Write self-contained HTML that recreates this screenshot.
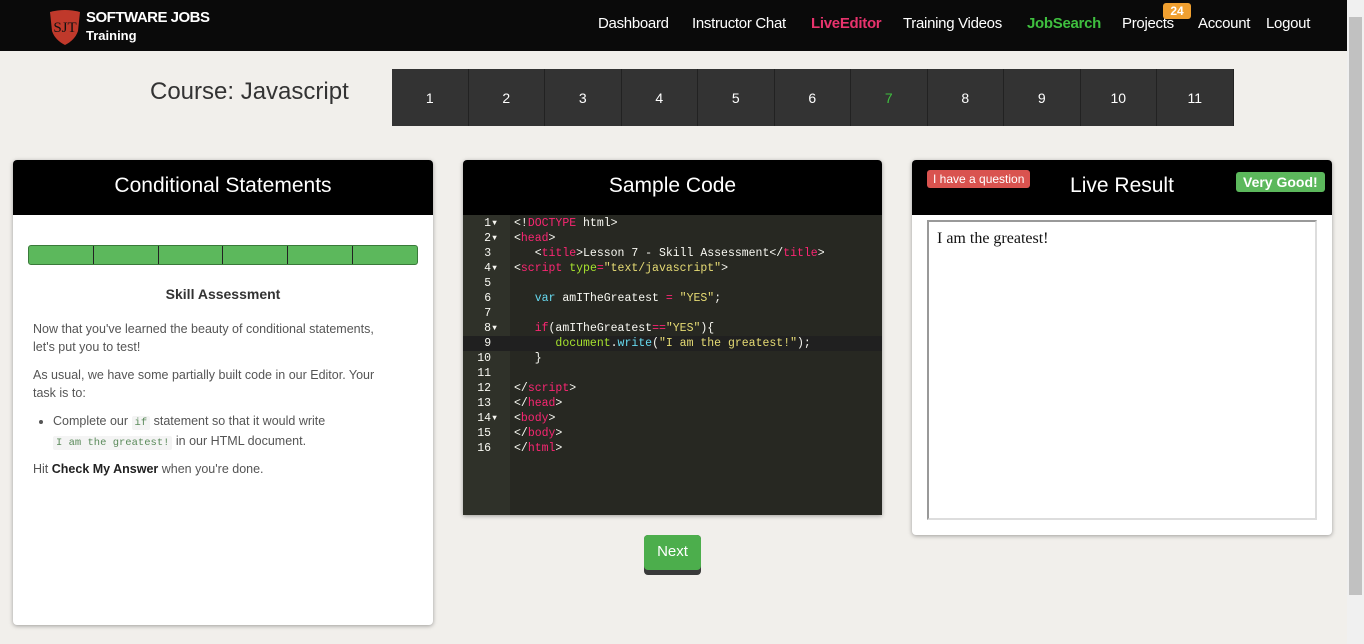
<!DOCTYPE html>
<html><head><style>
*{box-sizing:border-box;margin:0;padding:0}
body{width:1364px;height:644px;overflow:hidden;background:#f1efeb;font-family:"Liberation Sans",sans-serif;position:relative}
.nav{position:absolute;left:0;top:0;width:1347px;height:51px;background:#0a0a0a}
.nav a{position:absolute;top:15px;color:#fff;font-size:15px;text-decoration:none;letter-spacing:-.3px}
.sb{position:absolute;right:0;top:0;width:17px;height:644px;background:#f0f0f0}
.sb div{position:absolute;left:2px;top:17px;width:13px;height:578px;background:#c1c1c1}
.tabs{position:absolute;left:392px;top:69px;display:flex}
.tabs div{width:76.5px;height:57px;background:#333;border-right:1px solid #222;color:#fff;font-size:14px;display:flex;align-items:center;justify-content:center}
.panel{position:absolute;background:#fff;border-radius:4px;box-shadow:0 1px 4px rgba(0,0,0,.35);overflow:hidden}
.ph{height:55px;background:#000;color:#fff;font-size:21px;text-align:center;line-height:52px}
.code{position:absolute;top:55px;left:0;right:0;bottom:0;background:#272822;font-family:"Liberation Mono",monospace;font-size:11.5px}
.gut{position:absolute;left:0;top:0;bottom:0;width:47px;background:#2f3129;color:#8f908a}
.ln{height:15px;line-height:15px;white-space:pre;color:#f8f8f2}
.gut .ln{text-align:right;padding-right:12px}
.t{color:#f92672}.s{color:#e6db74}.a{color:#a6e22e}.k{color:#66d9ef}
.txt{font-size:12.5px;color:#555;line-height:18px}
code{font-family:"Liberation Mono",monospace;font-size:10.5px;background:#f4f4f4;color:#5a8a5a;padding:1px 3px;border-radius:2px;white-space:nowrap}
</style></head><body>
<div class="nav">
<svg style="position:absolute;left:48px;top:9px" width="34" height="37" viewBox="0 0 34 37"><path d="M2 3 Q17 -1 32 3 L30 22 Q27 31 17 36 Q7 31 4 22Z" fill="#c0392b"/><text x="17" y="23" font-family="Liberation Serif" font-size="15" fill="#111" text-anchor="middle">SJT</text></svg>
<div style="position:absolute;left:86px;top:9px;color:#fff;font-weight:bold;font-size:15px;letter-spacing:-.5px">SOFTWARE JOBS</div>
<div style="position:absolute;left:86px;top:28px;color:#fff;font-weight:bold;font-size:13px">Training</div>
<a style="left:598px">Dashboard</a>
<a style="left:692px">Instructor Chat</a>
<a style="left:811px;color:#e8336d;font-weight:bold">LiveEditor</a>
<a style="left:903px">Training Videos</a>
<a style="left:1027px;color:#3fbf3f;font-weight:bold">JobSearch</a>
<a style="left:1122px">Projects</a>
<div style="position:absolute;left:1163px;top:3px;width:28px;height:16px;background:#f0a030;border-radius:3px;color:#fff;font-size:12px;font-weight:bold;text-align:center;line-height:16px">24</div>
<a style="left:1198px">Account</a>
<a style="left:1266px">Logout</a>
</div>
<div class="sb"><div></div></div>
<div style="position:absolute;left:150px;top:78px;font-size:24px;color:#333">Course: Javascript</div>
<div class="tabs"><div>1</div><div>2</div><div>3</div><div>4</div><div>5</div><div>6</div><div style="color:#3fbf3f">7</div><div>8</div><div>9</div><div>10</div><div>11</div></div>

<div class="panel" style="left:13px;top:160px;width:420px;height:465px">
<div class="ph">Conditional Statements</div>
<div style="position:absolute;left:15px;top:85px;width:390px;height:20px;background:#5cb85c;border-radius:3px;border:1px solid #3a7a3a;display:flex">
<div style="flex:1;border-right:1px solid #222"></div><div style="flex:1;border-right:1px solid #222"></div><div style="flex:1;border-right:1px solid #222"></div><div style="flex:1;border-right:1px solid #222"></div><div style="flex:1;border-right:1px solid #222"></div><div style="flex:1"></div></div>
<div style="position:absolute;top:126px;width:100%;text-align:center;font-weight:bold;font-size:14px;color:#333">Skill Assessment</div>
<div class="txt" style="position:absolute;left:20px;top:160px;width:370px">
<p>Now that you've learned the beauty of conditional statements,<br>let's put you to test!</p>
<p style="margin-top:10px">As usual, we have some partially built code in our Editor. Your<br>task is to:</p>
<ul style="margin:10px 0 0 20px"><li>Complete our <code>if</code> statement so that it would write<br><code>I am the greatest!</code> in our HTML document.</li></ul>
<p style="margin-top:8px">Hit <b style="color:#222">Check My Answer</b> when you're done.</p>
</div></div>

<div class="panel" style="left:463px;top:160px;width:419px;height:355px;border-radius:4px 4px 0 0">
<div class="ph">Sample Code</div>
<div class="code">
<div class="gut" style="padding-top:1px"><div class="ln">1▾</div><div class="ln">2▾</div><div class="ln">3 </div><div class="ln">4▾</div><div class="ln">5 </div><div class="ln">6 </div><div class="ln">7 </div><div class="ln">8▾</div><div class="ln" style="background:#202020">9 </div><div class="ln">10 </div><div class="ln">11 </div><div class="ln">12 </div><div class="ln">13 </div><div class="ln">14▾</div><div class="ln">15 </div><div class="ln">16 </div></div>
<div style="position:absolute;left:47px;top:1px;right:0">
<div class="ln" style="padding-left:4px">&lt;!<span class="t">DOCTYPE</span> html&gt;</div>
<div class="ln" style="padding-left:4px">&lt;<span class="t">head</span>&gt;</div>
<div class="ln" style="padding-left:4px">   &lt;<span class="t">title</span>&gt;Lesson 7 - Skill Assessment&lt;/<span class="t">title</span>&gt;</div>
<div class="ln" style="padding-left:4px">&lt;<span class="t">script</span> <span class="a">type</span><span class="t">=</span><span class="s">"text/javascript"</span>&gt;</div>
<div class="ln"> </div>
<div class="ln" style="padding-left:4px">   <span class="k">var</span> amITheGreatest <span class="t">=</span> <span class="s">"YES"</span>;</div>
<div class="ln"> </div>
<div class="ln" style="padding-left:4px">   <span class="t">if</span>(amITheGreatest<span class="t">==</span><span class="s">"YES"</span>){</div>
<div class="ln" style="padding-left:4px;background:#202020">      <span class="a">document</span>.<span class="k">write</span>(<span class="s">"I am the greatest!"</span>);</div>
<div class="ln" style="padding-left:4px">   }</div>
<div class="ln"> </div>
<div class="ln" style="padding-left:4px">&lt;/<span class="t">script</span>&gt;</div>
<div class="ln" style="padding-left:4px">&lt;/<span class="t">head</span>&gt;</div>
<div class="ln" style="padding-left:4px">&lt;<span class="t">body</span>&gt;</div>
<div class="ln" style="padding-left:4px">&lt;/<span class="t">body</span>&gt;</div>
<div class="ln" style="padding-left:4px">&lt;/<span class="t">html</span>&gt;</div>
</div></div></div>

<div style="position:absolute;left:644px;top:535px;width:57px;height:40px;background:#3a3a3a;border-radius:4px"></div>
<div style="position:absolute;left:644px;top:535px;width:57px;height:35px;background:#4cae4c;border-radius:4px;color:#fff;font-size:15px;text-align:center;line-height:34px">Next</div>

<div class="panel" style="left:912px;top:160px;width:420px;height:375px">
<div class="ph" style="padding-left:0">Live Result</div>
<div style="position:absolute;left:15px;top:10px;background:#d9534f;color:#fff;font-size:12px;padding:2px 6px;border-radius:3px">I have a question</div>
<div style="position:absolute;left:324px;top:12px;background:#5cb85c;color:#fff;font-size:14px;font-weight:bold;padding:2px 7px;border-radius:3px">Very Good!</div>
<div style="position:absolute;left:15px;top:60px;width:390px;height:300px;border:2px solid #999;border-right-color:#ddd;border-bottom-color:#ddd;padding:8px;font-family:'Liberation Serif',serif;font-size:16px;color:#111">I am the greatest!</div>
</div>
</body></html>
